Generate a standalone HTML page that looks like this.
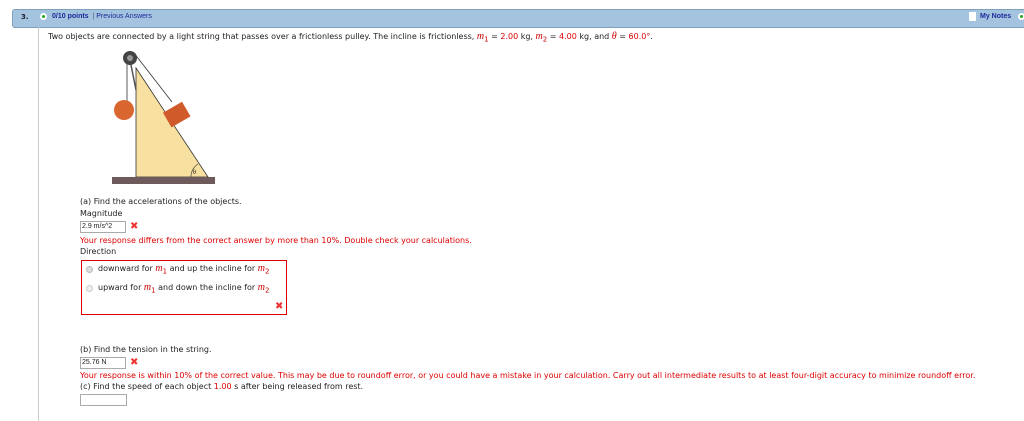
<html><head><style>
body{margin:0;width:1024px;height:421px;background:#fff;font-family:"DejaVu Sans","Liberation Sans",sans-serif;font-size:8px;color:#222;position:relative;overflow:hidden}
.a{position:absolute;white-space:nowrap}
.r{color:#d00}
i{font-family:"Liberation Serif",serif;color:#c00;font-size:10px}
sub{font-size:7px;color:#c00}
.in{position:absolute;border:1px solid #aaa;height:10px;background:#fff;font-size:7px;line-height:10px;padding-left:1px;font-family:"Liberation Sans",sans-serif}
.x{color:#e33;font-weight:bold;font-size:10px}
</style></head><body>
<div class="a" style="left:12px;top:9px;width:1020px;height:17px;background:#a3c3df;border:1px solid #7f9fba;border-radius:3px"></div>
<div class="a" style="left:21px;top:13px;font-weight:bold;font-size:7px;color:#223">3.</div>
<div class="a" style="left:40px;top:13px;width:7px;height:7px;border-radius:50%;background:#fff"><div style="margin:2px;width:3px;height:3px;border-radius:50%;background:#2a2"></div></div>
<div class="a" style="left:52px;top:13px;font-size:7px;color:#1a2a9a;font-family:'Liberation Sans',sans-serif"><b>0/10 points</b> &nbsp;<span style="color:#557">|</span> Previous Answers</div>
<div class="a" style="left:969px;top:12px;width:7px;height:9px;background:#fff"></div>
<div class="a" style="left:980px;top:13px;font-size:7px;color:#1a2a9a;font-weight:bold;font-family:'Liberation Sans',sans-serif">My Notes</div>
<div class="a" style="left:1018px;top:13px;width:7px;height:7px;border-radius:50%;background:#fff"><div style="margin:2px;width:3px;height:3px;border-radius:50%;background:#2a2"></div></div>
<div class="a" style="left:38px;top:27px;width:1px;height:394px;background:#ccc"></div>
<div class="a" style="left:48px;top:31px">Two objects are connected by a light string that passes over a frictionless pulley. The incline is frictionless, <i>m</i><sub>1</sub> = <span class="r">2.00</span> kg, <i>m</i><sub>2</sub> = <span class="r">4.00</span> kg, and <i>θ</i> = <span class="r">60.0°</span>.</div>
<svg class="a" style="left:90px;top:40px" width="150" height="150">
<polygon points="46,28 46,137 118,137" fill="#f7e0a0" stroke="#333" stroke-width="0.8"/>
<line x1="37" y1="17" x2="37" y2="63" stroke="#333" stroke-width="0.8"/>
<line x1="44" y1="13" x2="82" y2="62" stroke="#333" stroke-width="0.8"/>
<line x1="40" y1="20" x2="46" y2="50" stroke="#555" stroke-width="1.5"/>
<circle cx="40" cy="18" r="7" fill="#444"/><circle cx="40" cy="18" r="3" fill="#999"/>
<circle cx="34" cy="70" r="10" fill="#d9662f"/>
<g transform="rotate(-30 87 75)"><rect x="76" y="66" width="22" height="17" fill="#d05a2a"/></g>
<path d="M101 137 A 15 15 0 0 1 108 124" fill="none" stroke="#333" stroke-width="0.6"/>
<text x="103" y="134" font-size="6" font-family="Liberation Serif">θ</text>
<rect x="22" y="137" width="103" height="7" fill="#6e5a5a"/>
</svg>
<div class="a" style="left:80px;top:197px">(a) Find the accelerations of the objects.</div>
<div class="a" style="left:80px;top:209px">Magnitude</div>
<div class="in" style="left:80px;top:221px;width:43px">2.9 m/s^2</div>
<div class="a x" style="left:130px;top:221px">✖</div>
<div class="a r" style="left:80px;top:236px">Your response differs from the correct answer by more than 10%. Double check your calculations.</div>
<div class="a" style="left:80px;top:247px">Direction</div>
<div class="a" style="left:81px;top:260px;width:204px;height:53px;border:1px solid #d00"></div>
<div class="a" style="left:86px;top:266px;width:5px;height:5px;border-radius:50%;background:#ddd;border:1px solid #bbb"></div>
<div class="a" style="left:98px;top:263px">downward for <i>m</i><sub>1</sub> and up the incline for <i>m</i><sub>2</sub></div>
<div class="a" style="left:86px;top:285px;width:5px;height:5px;border-radius:50%;background:#eee;border:1px solid #ccc"></div>
<div class="a" style="left:98px;top:282px">upward for <i>m</i><sub>1</sub> and down the incline for <i>m</i><sub>2</sub></div>
<div class="a x" style="left:275px;top:301px">✖</div>
<div class="a" style="left:80px;top:345px">(b) Find the tension in the string.</div>
<div class="in" style="left:80px;top:357px;width:43px">25.76 N</div>
<div class="a x" style="left:130px;top:357px">✖</div>
<div class="a r" style="left:80px;top:371px">Your response is within 10% of the correct value. This may be due to roundoff error, or you could have a mistake in your calculation. Carry out all intermediate results to at least four-digit accuracy to minimize roundoff error.</div>
<div class="a" style="left:80px;top:382px">(c) Find the speed of each object <span class="r">1.00</span> s after being released from rest.</div>
<div class="in" style="left:80px;top:394px;width:44px"></div>
</body></html>
